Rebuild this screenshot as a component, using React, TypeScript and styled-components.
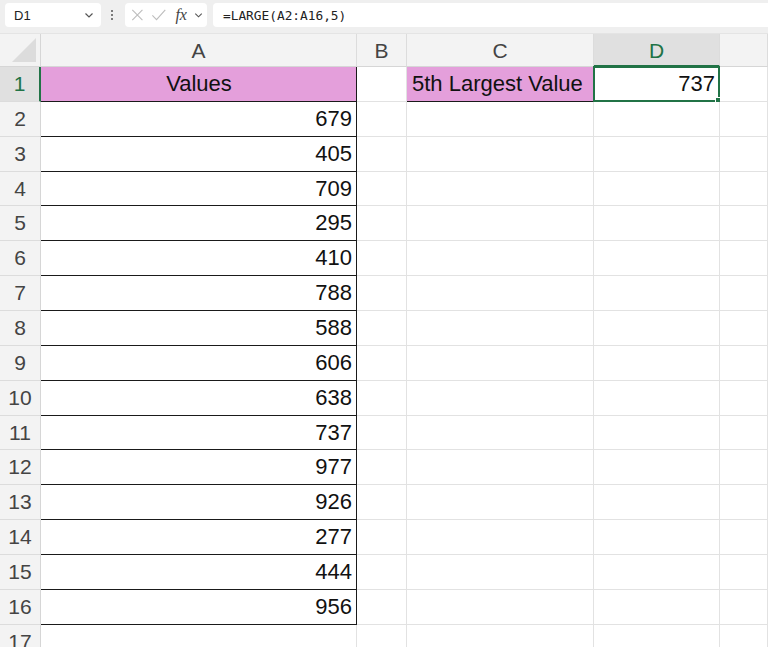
import styled, { createGlobalStyle } from 'styled-components';

const GlobalStyle = createGlobalStyle`
  html, body {
    margin: 0;
    padding: 0;
    background: #ffffff;
    overflow: hidden;
  }
  body {
    font-family: "Liberation Sans", Arial, sans-serif;
  }
`;

const Color = {
  toolbar: '#efefef',
  header: '#f3f3f3',
  headerActive: '#e0e0e0',
  headerText: '#444444',
  grid: '#e2e2e2',
  green: '#217346',
  pink: '#e49fdb',
  ink: '#111111',
};

const Page = styled.div`
  width: 768px;
  height: 647px;
  display: flex;
  flex-direction: column;
  overflow: hidden;
`;

const Toolbar = styled.div`
  flex-shrink: 0;
  display: flex;
  align-items: center;
  height: 34px;
  padding: 0 0 0 5px;
  gap: 6px;
  background: ${Color.toolbar};
  border-bottom: 1px solid #e4e4e4;
  box-sizing: border-box;
`;

const Box = styled.div`
  display: flex;
  align-items: center;
  height: 24px;
  margin-top: -3px;
  background: #ffffff;
  border-radius: 4px;
  box-sizing: border-box;
`;

const NameBox = styled(Box)`
  width: 96px;
  padding: 0 6px 0 9px;
  justify-content: space-between;
  font-size: 13px;
  color: #222;
`;

const Dots = styled.div`
  display: flex;
  flex-direction: column;
  gap: 2px;
  margin: -3px 6px 0 4px;

  span {
    width: 2px;
    height: 2px;
    background: #555;
    border-radius: 1px;
  }
`;

const IconBox = styled(Box)`
  width: 82px;
  padding: 0 3px 0 5px;
  gap: 6px;
`;

const FormulaBox = styled(Box)`
  flex: 1;
  padding-left: 10px;
  border-radius: 4px 0 0 4px;
  font-family: "DejaVu Sans Mono", "Liberation Mono", monospace;
  font-size: 12.8px;
  color: #222;
`;

const Fx = styled.span`
  font-family: "Liberation Serif", serif;
  font-style: italic;
  font-size: 16px;
  color: #444;
  margin-left: 3px;
`;

const Sheet = styled.div`
  flex-shrink: 0;
  display: grid;
  grid-template-columns: 41px 316px 50px 187px 126px 1fr;
  grid-template-rows: 33px;
  grid-auto-rows: 34.86px;
`;

const Corner = styled.div`
  position: relative;
  background: ${Color.header};
  border-right: 1px solid #d6d6d6;
  border-bottom: 1px solid #d6d6d6;

  &::after {
    content: '';
    position: absolute;
    right: 4px;
    bottom: 4px;
    width: 0;
    height: 0;
    border-left: 24px solid transparent;
    border-bottom: 24px solid #dcdcdc;
  }
`;

const ColHead = styled.div<{ $active?: boolean }>`
  display: flex;
  align-items: center;
  justify-content: center;
  font-size: 21px;
  color: ${(p) => (p.$active ? Color.green : Color.headerText)};
  background: ${(p) => (p.$active ? Color.headerActive : Color.header)};
  border-right: 1px solid #dcdcdc;
  border-bottom: ${(p) => (p.$active ? `2px solid ${Color.green}` : '1px solid #d6d6d6')};
  box-sizing: border-box;
  padding-top: 2px;
`;

const RowHead = styled.div<{ $active?: boolean }>`
  display: flex;
  align-items: center;
  justify-content: center;
  font-size: 21px;
  color: ${(p) => (p.$active ? Color.green : Color.headerText)};
  background: ${(p) => (p.$active ? Color.headerActive : Color.header)};
  border-right: ${(p) => (p.$active ? `2px solid ${Color.green}` : '1px solid #d6d6d6')};
  border-bottom: 1px solid #dcdcdc;
  box-sizing: border-box;
`;

const Cell = styled.div<{ $fill?: string; $boxed?: boolean; $align?: string }>`
  position: relative;
  display: flex;
  align-items: center;
  justify-content: ${(p) => p.$align || 'flex-start'};
  padding: 0 4px 0 5px;
  font-size: 22px;
  color: ${Color.ink};
  background: ${(p) => p.$fill || '#ffffff'};
  border-right: 1px solid ${(p) => (p.$boxed ? '#1a1a1a' : Color.grid)};
  border-bottom: 1px solid ${(p) => (p.$boxed ? '#1a1a1a' : Color.grid)};
  box-sizing: border-box;
  white-space: nowrap;
  overflow: visible;
`;

const Selection = styled.div`
  position: absolute;
  left: -1px;
  top: -1px;
  right: -1px;
  bottom: -1px;
  border: 2px solid ${Color.green};
  pointer-events: none;

  &::after {
    content: '';
    position: absolute;
    right: -4px;
    bottom: -4px;
    width: 5px;
    height: 5px;
    background: ${Color.green};
    border: 1px solid #ffffff;
  }
`;

const Chevron = () => (
  <svg width="12" height="12" viewBox="0 0 12 12" fill="none" stroke="#555" strokeWidth="1.2">
    <path d="M2.5 4.5 L6 8 L9.5 4.5" />
  </svg>
);

const Cross = () => (
  <svg width="16" height="16" viewBox="0 0 16 16" fill="none" stroke="#bdbdbd" strokeWidth="1.2">
    <path d="M2.5 2.5 L13.5 13.5 M13.5 2.5 L2.5 13.5" />
  </svg>
);

const Check = () => (
  <svg width="17" height="16" viewBox="0 0 17 16" fill="none" stroke="#bdbdbd" strokeWidth="1.2">
    <path d="M1.5 8.5 L6 13 L15.5 2.5" />
  </svg>
);

const values = [679, 405, 709, 295, 410, 788, 588, 606, 638, 737, 977, 926, 277, 444, 956];
const columns = ['A', 'B', 'C', 'D', ''];

function App() {
  const rows = [];
  for (let r = 2; r <= 17; r += 1) {
    const v = values[r - 2];
    rows.push(
      <RowHead key={`h${r}`}>{r}</RowHead>,
      <Cell key={`a${r}`} $boxed={v !== undefined} $align="flex-end">{v}</Cell>,
      <Cell key={`b${r}`} />,
      <Cell key={`c${r}`} />,
      <Cell key={`d${r}`} />,
      <Cell key={`e${r}`} />,
    );
  }

  return (
    <Page>
      <GlobalStyle />
      <Toolbar>
        <NameBox>
          D1
          <Chevron />
        </NameBox>
        <Dots>
          <span />
          <span />
          <span />
        </Dots>
        <IconBox>
          <Cross />
          <Check />
          <Fx>fx</Fx>
          <Chevron />
        </IconBox>
        <FormulaBox>=LARGE(A2:A16,5)</FormulaBox>
      </Toolbar>
      <Sheet>
        <Corner />
        {columns.map((c) => (
          <ColHead key={c || 'E'} $active={c === 'D'}>{c}</ColHead>
        ))}
        <RowHead $active>1</RowHead>
        <Cell $fill={Color.pink} $boxed $align="center">Values</Cell>
        <Cell />
        <Cell $fill={Color.pink} $boxed>5th Largest Value</Cell>
        <Cell $align="flex-end">
          737
          <Selection />
        </Cell>
        <Cell />
        {rows}
      </Sheet>
    </Page>
  );
}

export default App;
